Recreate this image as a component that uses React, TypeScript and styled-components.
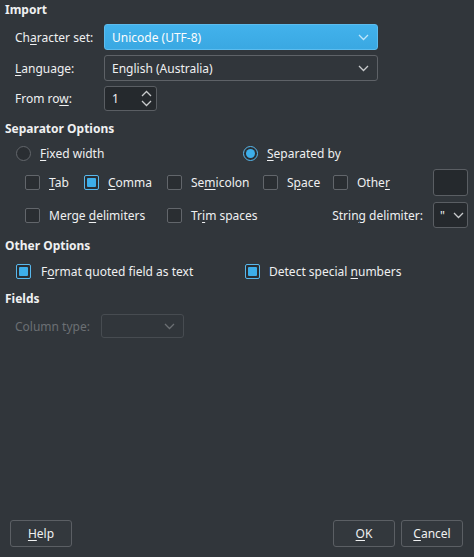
import React from "react";
import styled, { createGlobalStyle, css } from "styled-components";

const GlobalStyle = createGlobalStyle`
  html, body {
    margin: 0;
    padding: 0;
    background: #31363b;
  }
  body {
    font-family: "Noto Sans", "DejaVu Sans", sans-serif;
    font-size: 12px;
    color: #eff0f1;
  }
`;

const Dialog = styled.div`
  width: 474px;
  height: 557px;
  box-sizing: border-box;
  padding: 1px 0 10px 0;
  display: flex;
  flex-direction: column;
`;

const SectionTitle = styled.div<{ $gap?: number }>`
  font-weight: 700;
  line-height: 18px;
  height: 18px;
  padding-left: 5px;
  margin-top: ${(p) => p.$gap ?? 0}px;
`;

const FormGrid = styled.div`
  display: grid;
  grid-template-columns: 89px 274px;
  grid-auto-rows: auto;
  row-gap: 5px;
  margin: 5px 0 0 15px;
  align-items: center;
`;

const Label = styled.span<{ $disabled?: boolean }>`
  white-space: nowrap;
  color: ${(p) => (p.$disabled ? "#6b6f73" : "#eff0f1")};
`;

const Key = styled.span`
  text-decoration: underline;
  text-underline-offset: 2px;
`;

const comboBase = css`
  box-sizing: border-box;
  display: flex;
  align-items: center;
  justify-content: space-between;
  border-radius: 3px;
  padding: 0 8px 0 7px;
`;

const Combo = styled.div<{ $active?: boolean; $dark?: boolean; $disabled?: boolean; $w?: number; $h?: number }>`
  ${comboBase};
  width: ${(p) => (p.$w ? `${p.$w}px` : "100%")};
  height: ${(p) => p.$h ?? 26}px;
  background: ${(p) =>
    p.$active
      ? "linear-gradient(#42b2ec, #3aa8e2)"
      : p.$dark
      ? "#25292d"
      : "#31363b"};
  border: 1px solid
    ${(p) => (p.$active ? "#5cbcee" : p.$disabled ? "#474c51" : "#5e6267")};
  color: ${(p) => (p.$active ? "#fcfcfc" : "#eff0f1")};
`;

const Chevron = ({ color = "#c8cacc", up = false }: { color?: string; up?: boolean }) => (
  <svg width="11" height="7" viewBox="0 0 11 7">
    <polyline
      points={up ? "1,6 5.5,1.5 10,6" : "1,1 5.5,5.5 10,1"}
      fill="none"
      stroke={color}
      strokeWidth="1.3"
    />
  </svg>
);

const Spin = styled.div`
  ${comboBase};
  width: 53px;
  height: 25px;
  background: #25292d;
  border: 1px solid #5a5e63;
  padding: 0 4px 0 7px;
`;

const SpinArrows = styled.div`
  display: flex;
  flex-direction: column;
  gap: 3px;
`;

const TwoCols = styled.div<{ $left: number; $col: number; $gap: number }>`
  display: grid;
  grid-template-columns: ${(p) => p.$col}px auto;
  margin: ${(p) => p.$gap}px 0 0 ${(p) => p.$left}px;
  height: 20px;
  align-items: center;
`;

const Option = styled.label<{ $gap?: number }>`
  display: flex;
  align-items: center;
  gap: ${(p) => p.$gap ?? 9}px;
  white-space: nowrap;
`;

const RadioMark = styled.span<{ $on?: boolean }>`
  box-sizing: border-box;
  width: 15px;
  height: 15px;
  border-radius: 50%;
  border: 1px solid ${(p) => (p.$on ? "#58b8ec" : "#62666b")};
  background: #2a2e32;
  display: flex;
  align-items: center;
  justify-content: center;
  &::after {
    content: "";
    width: 9px;
    height: 9px;
    border-radius: 50%;
    background: ${(p) => (p.$on ? "#3daee9" : "transparent")};
  }
`;

const CheckMark = styled.span<{ $on?: boolean }>`
  box-sizing: border-box;
  width: 15px;
  height: 15px;
  border-radius: 2px;
  border: 1px solid ${(p) => (p.$on ? "#58b8ec" : "#62666b")};
  background: #2a2e32;
  display: flex;
  align-items: center;
  justify-content: center;
  &::after {
    content: "";
    width: 9px;
    height: 9px;
    border-radius: 1px;
    background: ${(p) => (p.$on ? "#3daee9" : "transparent")};
  }
`;

const SepGrid = styled.div`
  display: grid;
  grid-template-columns: 59px 83px 96px 70px 100px 35px;
  grid-template-rows: 27px 26px;
  row-gap: 6px;
  margin: 6px 0 0 25px;
  align-items: center;
`;

const Span = styled.div<{ $from: number; $to: number; $right?: boolean }>`
  grid-column: ${(p) => p.$from} / ${(p) => p.$to};
  display: flex;
  justify-content: ${(p) => (p.$right ? "flex-end" : "flex-start")};
  padding-right: ${(p) => (p.$right ? 10 : 0)}px;
`;

const TextField = styled.div`
  box-sizing: border-box;
  width: 35px;
  height: 27px;
  background: #25292d;
  border: 1px solid #5a5e63;
  border-radius: 3px;
`;

const SmallCombo = styled.div`
  ${comboBase};
  width: 35px;
  height: 26px;
  background: #25292d;
  border: 1px solid #5a5e63;
  padding: 0 3px 0 6px;
`;

const FieldsRow = styled.div`
  display: flex;
  align-items: center;
  gap: 11px;
  margin: 6px 0 0 15px;
  height: 24px;
`;

const Spacer = styled.div`
  flex: 1;
`;

const ButtonBar = styled.div`
  display: flex;
  align-items: center;
  padding: 0 11px 0 10px;
`;

const Button = styled.button`
  box-sizing: border-box;
  width: 62px;
  height: 27px;
  background: #33383d;
  border: 1px solid #5b5f64;
  border-radius: 3px;
  color: #eff0f1;
  font-family: inherit;
  font-size: 12px;
  padding: 0;
`;

const RightButtons = styled.div`
  display: flex;
  gap: 6px;
`;

export default function App() {
  return (
    <>
      <GlobalStyle />
      <Dialog>
        <SectionTitle>Import</SectionTitle>
        <FormGrid>
          <Label>
            Ch<Key>a</Key>racter set:
          </Label>
          <Combo $active>
            <span>Unicode (UTF-8)</span>
            <Chevron color="#bfe6fa" />
          </Combo>
          <Label>
            <Key>L</Key>anguage:
          </Label>
          <Combo>
            <span>English (Australia)</span>
            <Chevron />
          </Combo>
          <Label>
            From ro<Key>w</Key>:
          </Label>
          <Spin>
            <span>1</span>
            <SpinArrows>
              <Chevron up />
              <Chevron />
            </SpinArrows>
          </Spin>
        </FormGrid>

        <SectionTitle $gap={9}>Separator Options</SectionTitle>
        <TwoCols $left={16} $col={227} $gap={5}>
          <Option>
            <RadioMark />
            <span>
              <Key>F</Key>ixed width
            </span>
          </Option>
          <Option>
            <RadioMark $on />
            <span>
              <Key>S</Key>eparated by
            </span>
          </Option>
        </TwoCols>

        <SepGrid>
          <Option>
            <CheckMark />
            <span>
              <Key>T</Key>ab
            </span>
          </Option>
          <Option>
            <CheckMark $on />
            <span>
              <Key>C</Key>omma
            </span>
          </Option>
          <Option>
            <CheckMark />
            <span>
              Se<Key>m</Key>icolon
            </span>
          </Option>
          <Option>
            <CheckMark />
            <span>
              S<Key>p</Key>ace
            </span>
          </Option>
          <Option>
            <CheckMark />
            <span>
              Othe<Key>r</Key>
            </span>
          </Option>
          <TextField />

          <Span $from={1} $to={3}>
            <Option>
              <CheckMark />
              <span>
                Merge <Key>d</Key>elimiters
              </span>
            </Option>
          </Span>
          <Span $from={3} $to={4}>
            <Option>
              <CheckMark />
              <span>
                Tr<Key>i</Key>m spaces
              </span>
            </Option>
          </Span>
          <Span $from={4} $to={6} $right>
            <Label>
              Strin<Key>g</Key> delimiter:
            </Label>
          </Span>
          <SmallCombo>
            <span>"</span>
            <Chevron />
          </SmallCombo>
        </SepGrid>

        <SectionTitle $gap={9}>Other Options</SectionTitle>
        <TwoCols $left={16} $col={229} $gap={6}>
          <Option $gap={10}>
            <CheckMark $on />
            <span>
              F<Key>o</Key>rmat quoted field as text
            </span>
          </Option>
          <Option $gap={9}>
            <CheckMark $on />
            <span>
              Detect special <Key>n</Key>umbers
            </span>
          </Option>
        </TwoCols>

        <SectionTitle $gap={9}>Fields</SectionTitle>
        <FieldsRow>
          <Label $disabled>Column type:</Label>
          <Combo $disabled $w={83} $h={24}>
            <span />
            <Chevron color="#6b6f73" />
          </Combo>
        </FieldsRow>

        <Spacer />

        <ButtonBar>
          <Button>
            <Key>H</Key>elp
          </Button>
          <Spacer />
          <RightButtons>
            <Button>
              <Key>O</Key>K
            </Button>
            <Button>
              <Key>C</Key>ancel
            </Button>
          </RightButtons>
        </ButtonBar>
      </Dialog>
    </>
  );
}
